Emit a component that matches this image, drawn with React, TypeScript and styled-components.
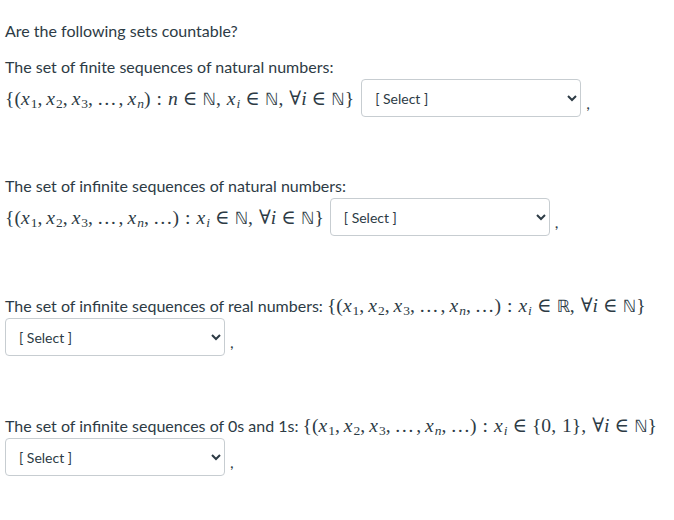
import React from 'react';
import styled, { createGlobalStyle } from 'styled-components';

const Global = createGlobalStyle`
  html, body { margin: 0; padding: 0; background: #fff; }
  body { font-family: Lato, "Open Sans", sans-serif; color: #2d3b45; }
`;

const Page = styled.div`
  padding: 19px 5px 0;
  display: flex;
  flex-direction: column;
`;

const Title = styled.p`
  margin: 0;
  font-size: 16px;
  line-height: 24px;
`;

const Question = styled.div<{ $gap: number }>`
  display: flex;
  flex-direction: column;
  margin-top: ${(p) => p.$gap}px;
`;

const TextLine = styled.div`
  font-size: 16px;
  line-height: 24px;
  height: 24px;
  white-space: nowrap;
`;

const AnswerRow = styled.div`
  display: flex;
  align-items: center;
  height: 38px;
  white-space: nowrap;
`;

const MathSpan = styled.span`
  font-family: "Liberation Serif", "DejaVu Serif", serif;
  font-size: 19.6px;
  color: #2d3b45;
  white-space: nowrap;
`;

const Var = styled.i`
  font-style: italic;
`;

const Sub = styled.sub<{ $italic?: boolean }>`
  font-size: 13.5px;
  vertical-align: -3px;
  line-height: 0;
  margin-left: 1px;
  font-style: ${(p) => (p.$italic ? 'italic' : 'normal')};
`;

const Op = styled.span<{ $space: number }>`
  margin: 0 ${(p) => p.$space}px;
`;

const Set = styled.span`
  font-family: "DejaVu Sans", sans-serif;
  font-size: 17px;
`;

const Dropdown = styled.select<{ $left: number }>`
  width: 220px;
  height: 38px;
  margin-left: ${(p) => p.$left}px;
  font-family: Lato, sans-serif;
  font-size: 14px;
  color: #2d3b45;
  background: #fff;
  border: 1px solid #c7cdd1;
  border-radius: 4px;
  padding: 0 9px;
`;

const Comma = styled.span`
  font-size: 16px;
  margin-left: 5px;
  padding-top: 8px;
`;

const Seq: React.FC<{ infinite?: boolean }> = ({ infinite }) => (
  <>
    {'{('}
    <Var>x</Var>
    <Sub>1</Sub>,<Op $space={2} />
    <Var>x</Var>
    <Sub>2</Sub>,<Op $space={2} />
    <Var>x</Var>
    <Sub>3</Sub>,<Op $space={2} />…<Op $space={1} />,<Op $space={2} />
    <Var>x</Var>
    <Sub $italic>n</Sub>
    {infinite ? (
      <>
        ,<Op $space={2} />…
      </>
    ) : null}
    )<Op $space={6}>:</Op>
  </>
);

const Tail: React.FC<{ set: React.ReactNode }> = ({ set }) => (
  <>
    <Var>x</Var>
    <Sub $italic>i</Sub>
    <Op $space={5}>∈</Op>
    {set},<Op $space={3} />∀<Var>i</Var>
    <Op $space={5}>∈</Op>
    <Set>ℕ</Set>
    {'}'}
  </>
);

const Select: React.FC<{ left: number }> = ({ left }) => (
  <>
    <Dropdown $left={left} defaultValue="">
      <option value="">[ Select ]</option>
      <option value="yes">Countable</option>
      <option value="no">Uncountable</option>
    </Dropdown>
    <Comma>,</Comma>
  </>
);

export default function App() {
  return (
    <Page>
      <Global />
      <Title>Are the following sets countable?</Title>

      <Question $gap={12}>
        <TextLine>The set of finite sequences of natural numbers:</TextLine>
        <AnswerRow>
          <MathSpan>
            <Seq />
            <Var>n</Var>
            <Op $space={5}>∈</Op>
            <Set>ℕ</Set>,<Op $space={3} />
            <Tail set={<Set>ℕ</Set>} />
          </MathSpan>
          <Select left={7} />
        </AnswerRow>
      </Question>

      <Question $gap={57}>
        <TextLine>The set of infinite sequences of natural numbers:</TextLine>
        <AnswerRow>
          <MathSpan>
            <Seq infinite />
            <Tail set={<Set>ℕ</Set>} />
          </MathSpan>
          <Select left={6} />
        </AnswerRow>
      </Question>

      <Question $gap={58}>
        <TextLine>
          The set of infinite sequences of real numbers:{' '}
          <MathSpan>
            <Seq infinite />
            <Tail set={<Set>ℝ</Set>} />
          </MathSpan>
        </TextLine>
        <AnswerRow>
          <Select left={0} />
        </AnswerRow>
      </Question>

      <Question $gap={58}>
        <TextLine>
          The set of infinite sequences of 0s and 1s:{' '}
          <MathSpan>
            <Seq infinite />
            <Tail set={<>{'{'}0,<Op $space={3} />1{'}'}</>} />
          </MathSpan>
        </TextLine>
        <AnswerRow>
          <Select left={0} />
        </AnswerRow>
      </Question>
    </Page>
  );
}
